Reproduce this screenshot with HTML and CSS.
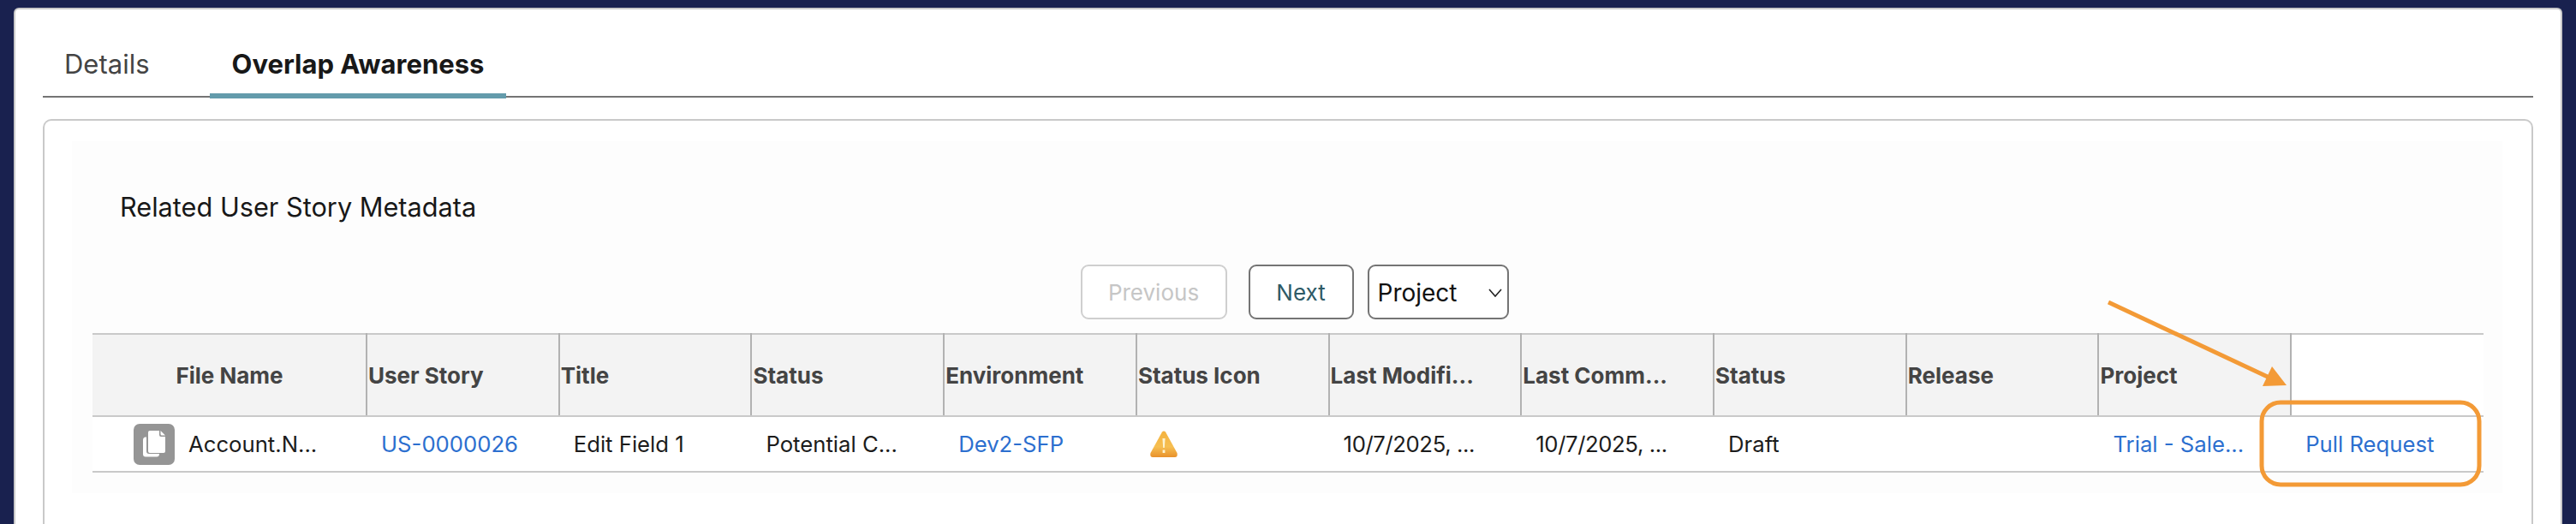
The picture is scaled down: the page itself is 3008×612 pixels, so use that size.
FILE: index.html
```html
<!DOCTYPE html>
<html lang="en">
<head>
    <meta charset="UTF-8">
    <meta name="viewport" content="width=device-width, initial-scale=1.0">
    <title>Overlap Awareness</title>
    <link rel="stylesheet" href="styles.css">
</head>
<body>
    <div class="card">
        <div class="tabs">
            <div class="tab">Details</div>
            <div class="tab tab-active">Overlap Awareness</div>
        </div>

        <div class="panel">
            <div class="panel-inner">
                <h2 class="panel-title">Related User Story Metadata</h2>

                <div class="controls">
                    <button class="btn btn-prev" disabled>Previous</button>
                    <button class="btn btn-next">Next</button>
                    <div class="select">
                        <span>Project</span>
                        <svg class="chevron" width="16" height="10" viewBox="0 0 16 10">
                            <path d="M1 1 L8 9 L15 1" fill="none" stroke="#222" stroke-width="1.6"/>
                        </svg>
                    </div>
                </div>

                <table class="meta-table">
                    <thead>
                        <tr>
                            <th class="center">File Name</th>
                            <th>User Story</th>
                            <th>Title</th>
                            <th>Status</th>
                            <th>Environment</th>
                            <th>Status Icon</th>
                            <th>Last Modifi...</th>
                            <th>Last Comm...</th>
                            <th>Status</th>
                            <th>Release</th>
                            <th>Project</th>
                            <th class="blank"></th>
                        </tr>
                    </thead>
                    <tbody>
                        <tr>
                            <td class="file-cell">
                                <span class="file-name">
                                    <svg class="file-icon" width="48" height="48" viewBox="0 0 48 48">
                                        <rect width="48" height="48" rx="7" fill="#959595"/>
                                        <path d="M11 19 Q11 15.5 14 15.5 L15 15.5 L15 32 Q15 35 18 35 L30 35 Q30 38.5 27 38.5 L14 38.5 Q11 38.5 11 35.5 Z" fill="#fff"/>
                                        <path d="M17 10 Q17 8 19 8 L30 8 L30 13 Q30 15 32 15 L37 15 L37 32 Q37 34 35 34 L19 34 Q17 34 17 32 Z" fill="#fff"/>
                                        <path d="M31.5 8 L37 13.5 L33 13.5 Q31.5 13.5 31.5 12 Z" fill="#fff"/>
                                    </svg>
                                    Account.N...
                                </span>
                            </td>
                            <td><a href="#">US-0000026</a></td>
                            <td>Edit Field 1</td>
                            <td>Potential C...</td>
                            <td><a href="#">Dev2-SFP</a></td>
                            <td class="icon-cell">
                                <svg width="32" height="31" viewBox="0 0 32 31">
                                    <defs>
                                        <linearGradient id="warnFill" x1="0" y1="0" x2="0" y2="1">
                                            <stop offset="0" stop-color="#f4b23e"/>
                                            <stop offset="0.6" stop-color="#f6bf52"/>
                                            <stop offset="1" stop-color="#e8912b"/>
                                        </linearGradient>
                                    </defs>
                                    <path d="M14 1.5 Q16 -0.5 18 1.5 L31.5 26 Q32.5 31 29 31 L3 31 Q-0.5 31 0.5 26 Z" fill="url(#warnFill)"/>
                                    <path d="M14.4 9 L17.6 9 L16.8 20 L15.2 20 Z M14.6 22.5 L17.4 22.5 L17.4 26 L14.6 26 Z" fill="#fdf3d0"/>
                                </svg>
                            </td>
                            <td class="date">10/7/2025, ...</td>
                            <td class="date">10/7/2025, ...</td>
                            <td>Draft</td>
                            <td></td>
                            <td><a href="#">Trial - Sale...</a></td>
                            <td class="action-cell"><a href="#">Pull Request</a></td>
                        </tr>
                    </tbody>
                </table>
            </div>
        </div>
    </div>

    <!-- annotation drawn on top of the screenshot -->
    <svg class="annotation" width="3008" height="612" viewBox="0 0 3008 612">
        <line class="arrow-line" x1="2462" y1="353" x2="2652" y2="442"/>
        <path d="M2653 428 L2670 450 L2642 451 Z" fill="#f39a36"/>
        <rect x="2641" y="470" width="254" height="96" rx="22" fill="none" stroke="#f39a36" stroke-width="5"/>
    </svg>
</body>
</html>
```

FILE: styles.css
```css
body {
    margin: 0;
    padding: 9px 16px 0;
    box-sizing: border-box;
    height: 612px;
    overflow: hidden;
    position: relative;
    background: #19214f;
    font-family: Inter, 'Noto Sans', sans-serif;
    color: #1c1c1c;
}

.card {
    height: 100%;
    box-sizing: border-box;
    padding: 0 32px;
    background: #fff;
    border: 2px solid #c9c9c9;
    border-bottom: none;
    border-radius: 6px 6px 0 0;
    display: flex;
    flex-direction: column;
}

.tabs {
    display: flex;
    height: 103px;
    flex-shrink: 0;
    border-bottom: 2px solid #747474;
    box-sizing: border-box;
    align-items: flex-end;
}

.tab {
    font-size: 31px;
    line-height: 34px;
    color: #444;
    padding: 0 0 17px 25px;
    margin-bottom: -3px;
    border-bottom: 6px solid transparent;
    box-sizing: border-box;
    width: 195px;
}

.tab-active {
    width: 346px;
    padding-left: 0;
    text-align: center;
    font-weight: 700;
    color: #181818;
    border-bottom-color: #639bab;
}

.panel {
    flex: 1;
    margin-top: 25px;
    padding: 24px 34px 0 32px;
    border: 2px solid #c9c9c9;
    border-bottom: none;
    border-radius: 10px 10px 0 0;
    min-height: 0;
}

.panel-inner {
    background: #fdfdfd;
    height: 411px;
    box-sizing: border-box;
    padding: 0 22px 0 24px;
}

.panel-title {
    margin: 0;
    padding: 60px 0 0 32px;
    font-size: 30.7px;
    line-height: 34px;
    font-weight: 400;
    color: #181818;
}

.controls {
    display: flex;
    justify-content: center;
    margin-top: 50px;
    height: 64px;
    padding-left: 15px;
}

.btn {
    height: 64px;
    box-sizing: border-box;
    border: 2px solid #747474;
    border-radius: 9px;
    background: #fff;
    font-family: inherit;
    font-size: 26px;
    color: #2e5a66;
    padding: 0;
}

.btn-prev {
    width: 171px;
    margin-right: 25px;
    border-color: #cfcfcf;
    color: #c6c6c6;
}

.btn-next {
    width: 123px;
    margin-right: 16px;
}

.select {
    width: 165px;
    height: 64px;
    box-sizing: border-box;
    border: 2px solid #747474;
    border-radius: 9px;
    background: #fff;
    font-size: 28px;
    color: #111;
    display: flex;
    align-items: center;
    justify-content: space-between;
    padding: 2px 6px 0 10px;
}

.meta-table {
    width: 2792px;
    margin-top: 16px;
    table-layout: fixed;
    border-collapse: collapse;
    font-size: 25.7px;
}

.meta-table th {
    box-sizing: border-box;
    height: 96px;
    padding: 0 0 0 1px;
    background: #f3f3f3;
    border-top: 2px solid #c9c9c9;
    border-bottom: 2px solid #c9c9c9;
    border-right: 2px solid #b2b2b2;
    text-align: left;
    font-weight: 700;
    font-size: 26px;
    color: #444;
    white-space: nowrap;
    overflow: hidden;
}

.meta-table th:first-child {
    width: 320px;
}

.meta-table th.center {
    text-align: center;
}

.meta-table th.blank {
    background: #fff;
    border-right: none;
}

.meta-table td {
    box-sizing: border-box;
    height: 65px;
    padding: 0 0 0 17px;
    background: #fff;
    border-bottom: 2px solid #c9c9c9;
    color: #1c1c1c;
    white-space: nowrap;
    overflow: hidden;
}

.meta-table a {
    color: #2c6fcf;
    text-decoration: none;
}

.meta-table td.file-cell {
    padding-left: 48px;
}

.file-name {
    display: flex;
    align-items: center;
    gap: 16px;
}

.file-icon {
    flex-shrink: 0;
}

.meta-table td.icon-cell {
    padding-left: 16px;
    line-height: 0;
}

.meta-table td.date {
    letter-spacing: -0.4px;
}

.meta-table td.action-cell {
    padding-left: 17px;
}

.annotation {
    position: absolute;
    top: 0;
    left: 0;
    pointer-events: none;
}

.arrow-line {
    stroke: #f39a36;
    stroke-width: 5;
}
```
